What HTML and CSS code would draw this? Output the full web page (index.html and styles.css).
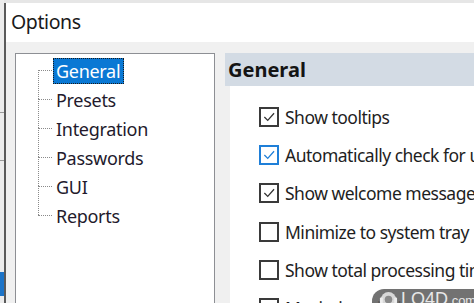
FILE: index.html
```html
<!DOCTYPE html>
<html>
<head>
<meta charset="utf-8">
<link rel="stylesheet" href="styles.css">
</head>
<body>
<div class="screen">
  <div class="behind">
    <div class="behind-line l1"></div>
    <div class="behind-line l2"></div>
    <div class="behind-blue"></div>
  </div>
  <div class="window">
    <div class="titlebar">Options</div>
    <div class="dialog">
      <div class="tree">
        <ul class="tree-list">
          <li class="node selected"><span class="label">General</span></li>
          <li class="node"><span class="label">Presets</span></li>
          <li class="node"><span class="label">Integration</span></li>
          <li class="node"><span class="label">Passwords</span></li>
          <li class="node"><span class="label">GUI</span></li>
          <li class="node last"><span class="label">Reports</span></li>
        </ul>
      </div>
      <div class="panel">
        <div class="panel-header">General</div>
        <div class="panel-body">
          <div class="option"><span class="box checked"><svg viewBox="0 0 19 19"><polyline points="4,9.5 8,13.5 15.5,5"/></svg></span><span class="text">Show tooltips</span></div>
          <div class="option"><span class="box checked focus"><svg viewBox="0 0 19 19"><polyline points="4,9.5 8,13.5 15.5,5"/></svg></span><span class="text">Automatically check for updates</span></div>
          <div class="option"><span class="box checked"><svg viewBox="0 0 19 19"><polyline points="4,9.5 8,13.5 15.5,5"/></svg></span><span class="text">Show welcome messages</span></div>
          <div class="option"><span class="box"></span><span class="text">Minimize to system tray</span></div>
          <div class="option"><span class="box"></span><span class="text">Show total processing time</span></div>
          <div class="option"><span class="box"></span><span class="text">Maximize window on start</span></div>
        </div>
      </div>
    </div>
  </div>
  <div class="watermark">
    <svg class="wm-logo" viewBox="0 0 20 20"><circle cx="10" cy="10" r="8" fill="#d8d8d8"/><circle cx="10" cy="10" r="4" fill="#8a8a8a"/><rect x="1" y="8" width="3" height="6" rx="1" fill="#eee"/><rect x="16" y="8" width="3" height="6" rx="1" fill="#eee"/></svg>
    <span class="wm-text">LO4D<span class="wm-small">.com</span></span>
  </div>
</div>
</body>
</html>
```
FILE: styles.css
```css
* { box-sizing: border-box; }
html, body {
  margin: 0;
  padding: 0;
  width: 474px;
  height: 303px;
  overflow: hidden;
  background: #e6e6e6;
  font-family: "Noto Sans", "Open Sans", sans-serif;
}
.screen {
  position: relative;
  display: flex;
  width: 474px;
  height: 303px;
  overflow: hidden;
}
.behind {
  position: relative;
  width: 4px;
  flex: 0 0 4px;
  background: #ececec;
}
.behind-line {
  position: absolute;
  left: 0;
  width: 4px;
  height: 1px;
  background: #9a9a9a;
}
.l1 { top: 112px; }
.l2 { top: 160px; }
.behind-blue {
  position: absolute;
  left: 0;
  top: 272px;
  width: 4px;
  height: 24px;
  background: #1c74c8;
}
.window {
  flex: 1;
  display: flex;
  flex-direction: column;
  border-left: 2px solid #5a5a5a;
  margin-top: 3px;
  background: #f0f0f0;
  min-width: 0;
}
.titlebar {
  height: 39px;
  flex: 0 0 39px;
  background: #ffffff;
  padding-left: 5px;
  font-size: 19.5px;
  line-height: 37px;
  color: #1a1a1a;
  letter-spacing: -0.4px;
}
.dialog {
  flex: 1;
  display: flex;
  gap: 10px;
  padding: 11px 0 0 9px;
  min-height: 0;
}
.tree {
  width: 200px;
  flex: 0 0 200px;
  background: #ffffff;
  border: 1px solid #8d8f94;
  border-bottom: none;
  padding-top: 2px;
}
.tree-list {
  list-style: none;
  margin: 0;
  padding: 0 0 0 22px;
}
.node {
  position: relative;
  height: 29px;
  padding-left: 15px;
  display: flex;
  align-items: center;
  font-size: 18px;
  color: #231a2c;
  letter-spacing: -0.3px;
}
.node::before {
  content: "";
  position: absolute;
  left: 0;
  top: 14px;
  width: 14px;
  border-top: 1px dotted #8a8a8a;
}
.node::after {
  content: "";
  position: absolute;
  left: 0;
  top: 14px;
  height: 29px;
  border-left: 1px dotted #8a8a8a;
}
.node.last::after { display: none; }
.label {
  display: inline-block;
  height: 26px;
  line-height: 24px;
  padding: 0 3px 0 2px;
  border: 1px solid transparent;
}
.selected .label {
  background: #0a78d4;
  color: #ffffff;
  border: 1px dotted #1a1a1a;
}
.panel {
  flex: 1;
  display: flex;
  flex-direction: column;
  min-width: 0;
}
.panel-header {
  height: 33px;
  flex: 0 0 33px;
  background: #d3dbe4;
  padding-left: 3px;
  font-weight: bold;
  font-size: 20px;
  line-height: 33px;
  color: #141414;
  white-space: nowrap;
}
.panel-body {
  flex: 1;
  margin-left: 5px;
  background: #ffffff;
  padding: 12px 0 0 29px;
}
.option {
  display: flex;
  align-items: center;
  height: 38.2px;
  gap: 6px;
  white-space: nowrap;
}
.box {
  width: 20px;
  height: 20px;
  flex: 0 0 20px;
  border: 2px solid #3a3a3a;
  background: #ffffff;
  display: flex;
}
.box svg {
  width: 100%;
  height: 100%;
  fill: none;
  stroke: #333333;
  stroke-width: 1.5;
}
.box.focus { border-color: #1f7fd8; }
.box.focus svg { stroke: #1f7fd8; }
.text {
  font-size: 17.5px;
  color: #1e1e1e;
  letter-spacing: -0.5px;
}
.watermark {
  position: absolute;
  left: 372px;
  top: 289px;
  width: 120px;
  height: 26px;
  border-radius: 12px 0 0 0;
  background: rgba(95, 95, 95, 0.88);
  display: flex;
  align-items: flex-start;
  padding: 0 0 0 7px;
  gap: 3px;
}
.wm-logo { width: 19px; height: 19px; margin-top: 1px; }
.wm-text {
  font-family: "Liberation Sans", sans-serif;
  font-size: 18px;
  line-height: 20px;
  color: #e8e8e8;
}
.wm-small { font-size: 13px; }
```
